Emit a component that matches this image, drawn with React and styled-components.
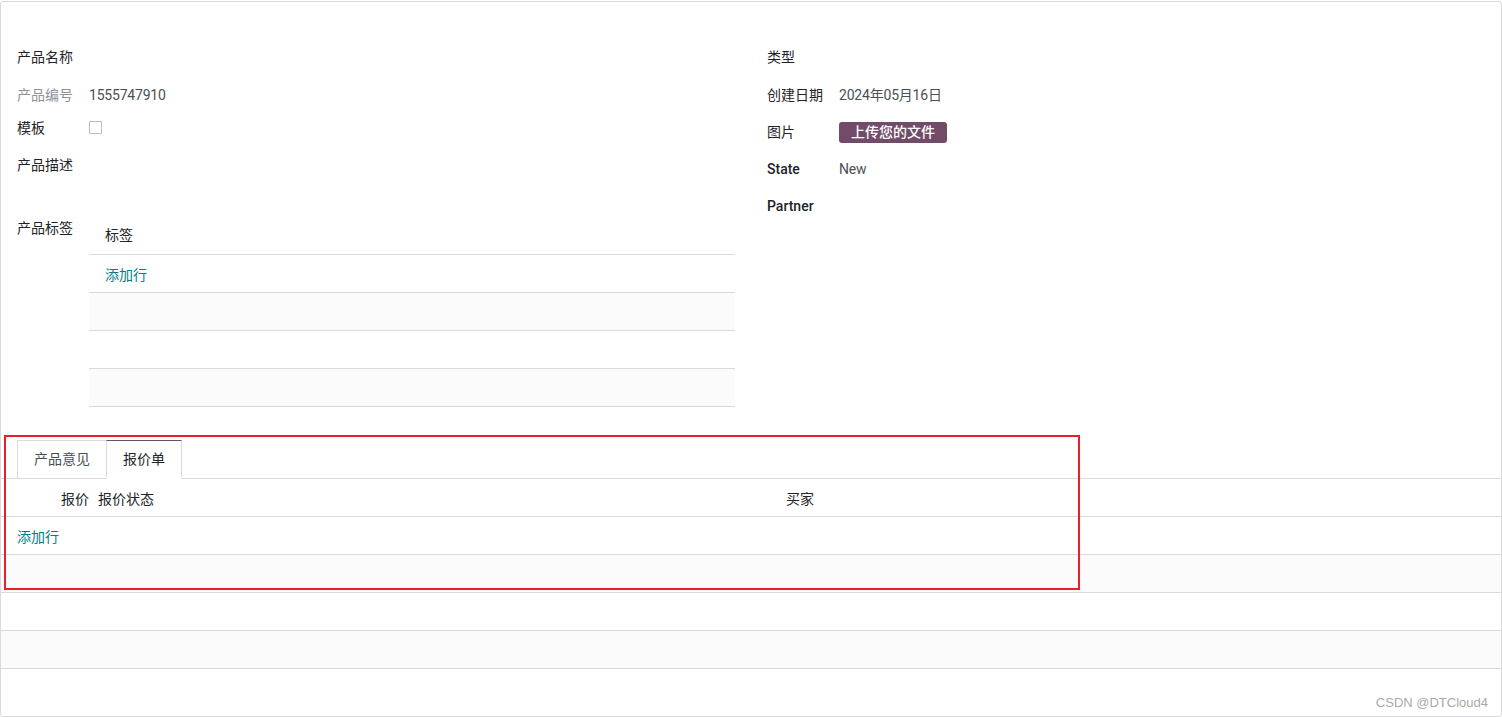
import React from 'react'
import styled, { createGlobalStyle } from 'styled-components'

const GlobalStyle = createGlobalStyle`
    html, body {
        margin: 0;
        padding: 0;
        background: #ffffff;
    }
    body {
        font-family: Roboto, "Noto Sans CJK SC", "Noto Sans", sans-serif;
        font-size: 14px;
        color: #212529;
    }
`

const leftFields = [
    { label: '产品名称', height: 38 },
    { label: '产品编号', value: '1555747910', muted: true, height: 33 },
    { label: '模板', checkbox: true, height: 37 },
    { label: '产品描述', height: 62 },
]

const rightFields = [
    { label: '类型', height: 38 },
    { label: '创建日期', value: '2024年05月16日', height: 37 },
    { label: '图片', upload: '上传您的文件', height: 37 },
    { label: 'State', value: 'New', height: 37, strong: true },
    { label: 'Partner', height: 37, strong: true },
]

const emptyShade = [true, false, true]

export default function App() {
    return (
        <>
            <GlobalStyle />
            <Sheet>
                <Groups>
                    <Group>
                        {leftFields.map(f => (
                            <Field key={f.label} $h={f.height}>
                                <Label $muted={f.muted}>{f.label}</Label>
                                {f.value && <Value>{f.value}</Value>}
                                {f.checkbox && <Check />}
                            </Field>
                        ))}
                        <Field>
                            <Label $top>产品标签</Label>
                            <SubTable>
                                <SubHead>标签</SubHead>
                                <SubRow><AddLine>添加行</AddLine></SubRow>
                                {emptyShade.map((s, i) => <SubRow key={i} $shade={s} />)}
                            </SubTable>
                        </Field>
                    </Group>
                    <Group>
                        {rightFields.map(f => (
                            <Field key={f.label} $h={f.height}>
                                <Label $strong={f.strong}>{f.label}</Label>
                                {f.value && <Value>{f.value}</Value>}
                                {f.upload && <UploadButton>{f.upload}</UploadButton>}
                            </Field>
                        ))}
                    </Group>
                </Groups>

                <Notebook>
                    <TabBar>
                        <Tab>产品意见</Tab>
                        <Tab $active>报价单</Tab>
                    </TabBar>
                    <ListHead>
                        <Cell $num>报价</Cell>
                        <Cell>报价状态</Cell>
                        <Cell>买家</Cell>
                    </ListHead>
                    <ListRow><AddLine $flush>添加行</AddLine></ListRow>
                    <ListRow $shade />
                    <ListRow />
                    <ListRow $shade />
                </Notebook>

                <Annotation />
                <Watermark>CSDN @DTCloud4</Watermark>
            </Sheet>
        </>
    )
}

const Sheet = styled.div`
    position: relative;
    box-sizing: border-box;
    width: 1502px;
    height: 716px;
    margin-top: 1px;
    border: 1px solid #d8dadd;
    border-radius: 3px;
    overflow: hidden;
`

const Groups = styled.div`
    display: grid;
    grid-template-columns: 1fr 1fr;
    column-gap: 32px;
    padding: 45px 16px 0;
`

const Group = styled.div`
    display: flex;
    flex-direction: column;
`

const Field = styled.div`
    display: flex;
    align-items: flex-start;
    height: ${p => p.$h ? `${p.$h}px` : 'auto'};
`

const Label = styled.div`
    flex: 0 0 72px;
    line-height: 20px;
    font-weight: ${p => p.$strong ? 500 : 400};
    color: ${p => p.$muted ? '#8d9299' : '#1f2328'};
    padding-top: ${p => p.$top ? '1px' : '0'};
`

const Value = styled.div`
    line-height: 20px;
    color: #4a4f56;
    letter-spacing: -0.2px;
`

const Check = styled.span`
    display: inline-block;
    box-sizing: border-box;
    width: 13px;
    height: 13px;
    margin-top: 3px;
    border: 1px solid #b9bdc2;
    border-radius: 1px;
    background: #fff;
`

const UploadButton = styled.span`
    display: inline-block;
    height: 21px;
    line-height: 21px;
    padding: 0 12px;
    border-radius: 3px;
    background: #714b67;
    color: #ffffff;
    font-weight: 500;
`

const SubTable = styled.div`
    flex: 1;
    display: flex;
    flex-direction: column;
`

const SubHead = styled.div`
    height: 37px;
    line-height: 37px;
    padding-left: 16px;
    border-bottom: 1px solid #d8dadd;
    color: #212529;
`

const SubRow = styled.div`
    height: 37px;
    display: flex;
    align-items: center;
    padding-left: 16px;
    border-bottom: 1px solid #d8dadd;
    background: ${p => p.$shade ? '#fbfbfb' : '#ffffff'};
`

const AddLine = styled.span`
    color: #017e84;
    cursor: pointer;
    padding-left: ${p => p.$flush ? '16px' : '0'};
`

const Notebook = styled.div`
    margin-top: 33px;
`

const TabBar = styled.div`
    display: flex;
    padding-left: 16px;
    border-bottom: 1px solid #d8dadd;
`

const Tab = styled.div`
    box-sizing: border-box;
    height: 39px;
    margin-bottom: -1px;
    padding: 0 16px;
    line-height: 37px;
    border: 1px solid #d8dadd;
    border-top-color: ${p => p.$active ? '#714b67' : '#d8dadd'};
    border-bottom-color: ${p => p.$active ? '#ffffff' : '#d8dadd'};
    margin-left: ${p => p.$active ? '-1px' : '0'};
    background: #ffffff;
    color: ${p => p.$active ? '#212529' : '#4a4f56'};
`

const ListHead = styled.div`
    display: grid;
    grid-template-columns: 92px 688px 1fr;
    height: 37px;
    align-items: center;
    border-bottom: 1px solid #d8dadd;
`

const Cell = styled.div`
    text-align: ${p => p.$num ? 'right' : 'left'};
    padding: ${p => p.$num ? '0 4px 0 0' : '0 0 0 5px'};
    color: #212529;
`

const ListRow = styled.div`
    height: 37px;
    display: flex;
    align-items: center;
    border-bottom: 1px solid #d8dadd;
    background: ${p => p.$shade ? '#fbfbfb' : '#ffffff'};
`

const Annotation = styled.div`
    position: absolute;
    left: 3px;
    top: 433px;
    width: 1076px;
    height: 155px;
    box-sizing: border-box;
    border: 2px solid #e8202a;
    pointer-events: none;
`

const Watermark = styled.div`
    position: absolute;
    right: 13px;
    bottom: 6px;
    font-family: "Liberation Sans", Arial, sans-serif;
    font-size: 13px;
    color: #a9a9a9;
`
